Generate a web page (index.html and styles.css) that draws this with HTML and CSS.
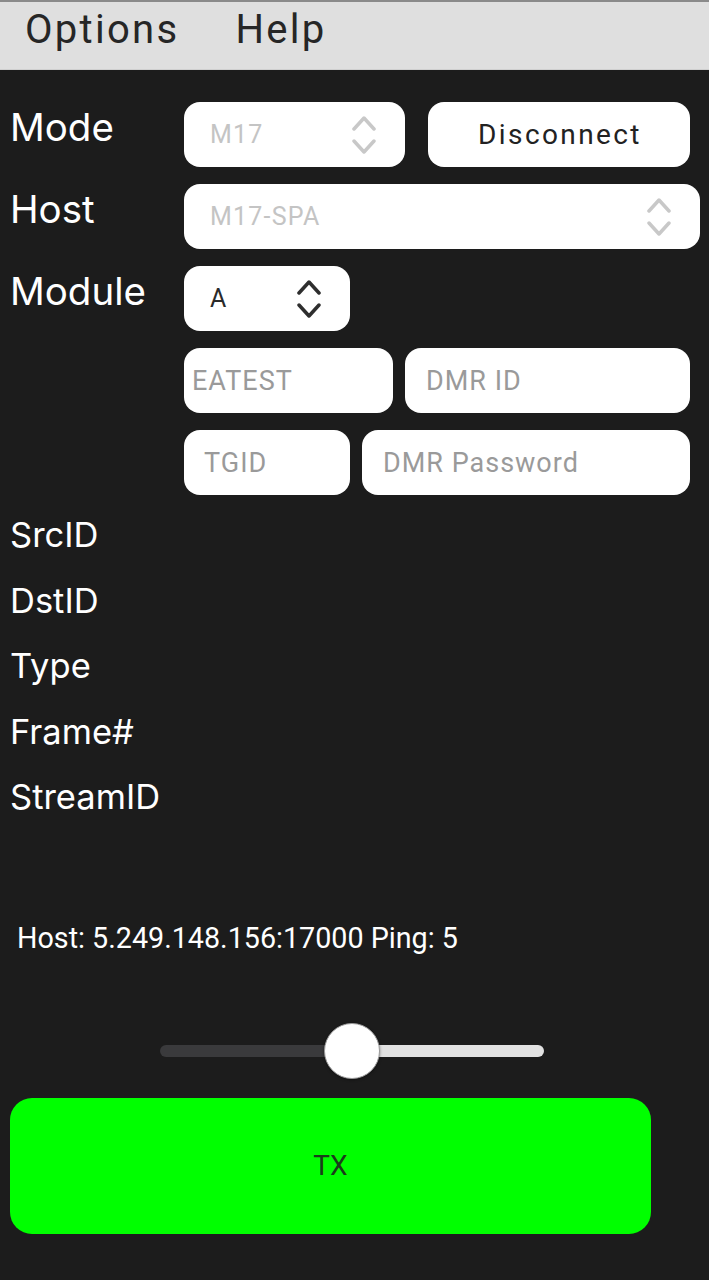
FILE: index.html
```html
<!DOCTYPE html>
<html>
<head>
<meta charset="utf-8">
<link rel="stylesheet" href="styles.css">
</head>
<body>
<div class="menubar">
  <span class="menu-item">Options</span>
  <span class="menu-item">Help</span>
</div>
<div class="page">
  <div class="form">
    <div class="row">
      <div class="label">Mode</div>
      <div class="controls">
        <div class="box combo w-mode"><span class="ph-light">M17</span>
          <svg class="chev" viewBox="0 0 24 40"><polyline points="2,14 12,3 22,14"/><polyline points="2,26 12,37 22,26"/></svg>
        </div>
        <div class="box button w-disc">Disconnect</div>
      </div>
    </div>
    <div class="row">
      <div class="label">Host</div>
      <div class="controls">
        <div class="box combo w-host"><span class="ph-light">M17-SPA</span>
          <svg class="chev" viewBox="0 0 24 40"><polyline points="2,14 12,3 22,14"/><polyline points="2,26 12,37 22,26"/></svg>
        </div>
      </div>
    </div>
    <div class="row">
      <div class="label">Module</div>
      <div class="controls">
        <div class="box combo w-mod"><span class="val">A</span>
          <svg class="chev dark" viewBox="0 0 24 40"><polyline points="2,14 12,3 22,14"/><polyline points="2,26 12,37 22,26"/></svg>
        </div>
      </div>
    </div>
    <div class="row">
      <div class="label"></div>
      <div class="controls gap-s">
        <div class="box input w-call pad-call">EATEST</div>
        <div class="box input w-dmrid pad-dmrid">DMR ID</div>
      </div>
    </div>
    <div class="row">
      <div class="label"></div>
      <div class="controls gap-s">
        <div class="box input w-mod pad-tgid">TGID</div>
        <div class="box input w-pass pad-pass">DMR Password</div>
      </div>
    </div>
  </div>
  <div class="info">
    <div class="info-row">SrcID</div>
    <div class="info-row">DstID</div>
    <div class="info-row">Type</div>
    <div class="info-row">Frame#</div>
    <div class="info-row">StreamID</div>
  </div>
  <div class="status">Host: 5.249.148.156:17000 Ping: 5</div>
  <div class="slider">
    <div class="track">
      <div class="track-fill"></div>
      <div class="track-rest"></div>
      <div class="thumb"></div>
    </div>
  </div>
  <div class="tx">TX</div>
</div>
</body>
</html>
```
FILE: styles.css
```css
html, body {
  margin: 0;
  padding: 0;
  background: #1c1c1c;
  height: 1280px;
  overflow: hidden;
}
body {
  font-family: Roboto, "Liberation Sans", sans-serif;
}
.menubar {
  height: 53px;
  border-top: 2px solid #8a8a8a;
  background: #dfdfdf;
  padding: 4px 0 10px 25px;
  display: flex;
  gap: 56px;
  border-bottom: 1px solid #cfcfcf;
  box-sizing: content-box;
}
.menu-item {
  font-size: 40px;
  line-height: 47px;
  color: #262626;
  letter-spacing: 2.3px;
}
.page {
  padding-left: 10px;
}
.form {
  padding-top: 32px;
  display: flex;
  flex-direction: column;
  gap: 17px;
}
.row {
  display: flex;
  height: 65px;
}
.label {
  width: 174px;
  flex: none;
  font-family: Inter, Roboto, sans-serif;
  font-size: 38.5px;
  line-height: 50px;
  color: #fff;
}
.controls {
  display: flex;
  gap: 23px;
}
.controls.gap-s {
  gap: 12px;
}
.box {
  height: 65px;
  background: #fff;
  border-radius: 16px;
  box-sizing: border-box;
  display: flex;
  align-items: center;
}
.combo {
  padding-left: 26px;
  padding-right: 29px;
  justify-content: space-between;
}
.ph-light {
  font-size: 25px;
  color: #c4c4c4;
  letter-spacing: 1.2px;
}
.val {
  font-size: 25px;
  color: #2a2a2a;
}
.chev {
  width: 24px;
  height: 40px;
  fill: none;
  stroke: #c8c8c8;
  stroke-width: 3.5;
  stroke-linecap: round;
  stroke-linejoin: round;
}
.chev.dark {
  stroke: #2e2e2e;
}
.button {
  justify-content: center;
  font-size: 28px;
  color: #222;
  letter-spacing: 2.4px;
  padding-left: 2px;
}
.input {
  font-size: 27px;
  color: #9a9a9a;
  letter-spacing: 1px;
}
.w-mode { width: 221px; }
.w-disc { width: 262px; }
.w-host { width: 516px; }
.w-mod { width: 166px; }
.w-call { width: 209px; }
.w-dmrid { width: 285px; }
.w-pass { width: 328px; }
.pad-call { padding-left: 8px; }
.pad-dmrid { padding-left: 21px; }
.pad-tgid { padding-left: 20px; }
.pad-pass { padding-left: 21px; }
.info {
  margin-top: 7px;
}
.info-row {
  font-family: Inter, Roboto, sans-serif;
  font-size: 34.5px;
  line-height: 65.5px;
  color: #fff;
}
.status {
  margin-top: 91px;
  margin-left: 7px;
  font-size: 28.7px;
  line-height: 34px;
  color: #fff;
}
.slider {
  margin-top: 68px;
  height: 56px;
  display: flex;
  align-items: center;
  padding-left: 150px;
}
.track {
  position: relative;
  width: 384px;
  height: 12px;
  display: flex;
}
.track-fill {
  width: 50%;
  background: #3a3a3c;
  border-radius: 6px 0 0 6px;
}
.track-rest {
  flex: 1;
  background: #e2e2e2;
  border-radius: 0 6px 6px 0;
}
.thumb {
  position: absolute;
  left: 164px;
  top: -22px;
  width: 54px;
  height: 54px;
  border-radius: 50%;
  background: #fff;
  border: 1px solid #9a9a9a;
  box-shadow: 0 1px 3px rgba(0,0,0,0.4);
}
.tx {
  margin-top: 19px;
  width: 641px;
  height: 136px;
  background: #00ff00;
  border-radius: 22px;
  display: flex;
  align-items: center;
  justify-content: center;
  font-size: 28px;
  color: #1b3b1b;
}
```
